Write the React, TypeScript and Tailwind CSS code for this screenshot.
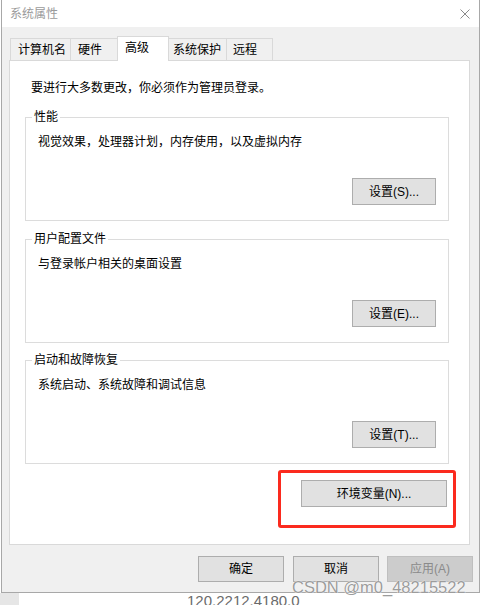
import React from 'react';

const font = "font-['Liberation_Sans','Noto_Sans_CJK_SC',sans-serif]";

const tabs = [
  { label: '计算机名', cls: 'w-[60px] h-[22px] border-t border-l pl-[7px]' },
  { label: '硬件', cls: 'w-[47px] h-[22px] border-t border-l pl-[7px]' },
  { label: '高级', cls: 'w-[52px] h-[25px] -mb-px border-t border-x pl-[7px] pb-[2px] bg-white relative z-10' },
  { label: '系统保护', cls: 'w-[58px] h-[22px] border-t border-r pl-[4px]' },
  { label: '远程', cls: 'w-[46px] h-[22px] border-t border-r pl-[6px]' },
];

const groups = [
  { title: '性能', desc: '视觉效果，处理器计划，内存使用，以及虚拟内存', button: '设置(S)...', mt: 'mt-[13px]' },
  { title: '用户配置文件', desc: '与登录帐户相关的桌面设置', button: '设置(E)...', mt: 'mt-[10px]' },
  { title: '启动和故障恢复', desc: '系统启动、系统故障和调试信息', button: '设置(T)...', mt: 'mt-[9px]' },
];

function WinButton({ children, className = '' }: { children: React.ReactNode; className?: string }) {
  return (
    <div className={`flex items-center justify-center border border-[#adadad] bg-[#e1e1e1] text-[12px] text-black ${className}`}>
      {children}
    </div>
  );
}

export default function App() {
  return (
    <div className={`relative w-[483px] h-[605px] overflow-hidden bg-white ${font}`}>
      <div className="ml-[1px] w-[479px] h-[593px] flex flex-col border-x border-b border-[#a8a8a8]">
        {/* title bar */}
        <div className="h-[27px] shrink-0 bg-white flex items-center justify-between pl-[8px] pr-[9px]">
          <span className="text-[12px] leading-[16px] text-[#9b9b9b]">系统属性</span>
          <svg width="10" height="10" viewBox="0 0 10 10">
            <path d="M0.5 0.5 L9.5 9.5 M9.5 0.5 L0.5 9.5" stroke="#8a8a8a" strokeWidth="1" />
          </svg>
        </div>

        {/* body */}
        <div className="flex-1 bg-[#f0f0f0] pl-[7px] pr-[6px] pt-[9px] flex flex-col">
          <div className="flex items-end h-[24px] pl-[1px]">
            {tabs.map((t) => (
              <div
                key={t.label}
                className={`flex items-center shrink-0 border-[#d9d9d9] text-[12px] leading-[16px] text-black ${t.cls}`}
              >
                {t.label}
              </div>
            ))}
          </div>

          <div className="w-[461px] h-[485px] border border-[#d9d9d9] bg-white flex flex-col pl-[15px]">
            <p className="pt-[19px] pl-[6px] text-[12px] leading-[16px] text-black">
              要进行大多数更改，你必须作为管理员登录。
            </p>

            {groups.map((g) => (
              <fieldset key={g.title} className={`w-[424px] border border-[#dcdcdc] ${g.mt}`}>
                <legend className="ml-[6px] px-[2px] text-[12px] leading-[16px] text-black">{g.title}</legend>
                <div className="flex flex-col pl-[12px] pr-[12px] pt-[9px] pb-[15px]">
                  <span className="text-[12px] leading-[16px] text-black">{g.desc}</span>
                  <WinButton className="self-end mt-[28px] w-[84px] h-[27px]">{g.button}</WinButton>
                </div>
              </fieldset>
            ))}

            <div className="self-end mr-[13px] mt-[6px] w-[178px] h-[58px] border-[3px] border-[#fb2a1e] rounded-[3px] pl-[20px] pt-[7px]">
              <WinButton className="w-[146px] h-[27px]">环境变量(N)...</WinButton>
            </div>
          </div>

          <div className="mt-[11px] flex justify-end gap-[9px]">
            <WinButton className="w-[86px] h-[26px]">确定</WinButton>
            <WinButton className="w-[86px] h-[26px] -mr-px">取消</WinButton>
            <div className="w-[86px] h-[26px] flex items-center justify-center border border-[#bfbfbf] bg-[#cccccc] text-[12px] text-[#8a8a8a]">
              应用(A)
            </div>
          </div>
        </div>
      </div>

      {/* strip below the window */}
      <div className="flex h-[12px]">
        <div className="w-[19px] h-full bg-[#e6e6e6]" />
        <span className="ml-[168px] text-[15px] leading-none text-[#6b6b6b] font-['Liberation_Sans',sans-serif]">
          120.2212.4180.0
        </span>
      </div>

      {/* watermark */}
      <span className="absolute left-[292px] top-[579px] text-[16.5px] leading-none text-[#9c9c9c] font-['Liberation_Sans',sans-serif] [text-shadow:0_0_1px_#ffffff,0_0_1px_#ffffff]">
        CSDN @m0_48215522
      </span>
    </div>
  );
}
